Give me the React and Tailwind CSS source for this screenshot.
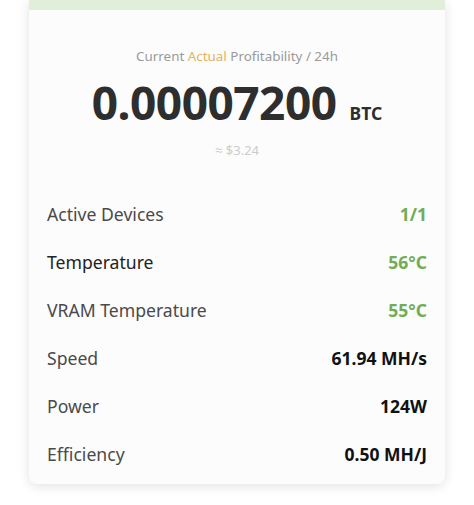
export default function App() {
  const rows = [
    { label: "Active Devices", value: "1/1", green: true, dark: false },
    { label: "Temperature", value: "56°C", green: true, dark: true },
    { label: "VRAM Temperature", value: "55°C", green: true, dark: false },
    { label: "Speed", value: "61.94 MH/s", green: false, dark: false },
    { label: "Power", value: "124W", green: false, dark: false },
    { label: "Efficiency", value: "0.50 MH/J", green: false, dark: false },
  ];

  return (
    <div
      className="w-[474px] h-[505px] bg-white overflow-hidden"
      style={{ fontFamily: '"Noto Sans", "Open Sans", sans-serif' }}
    >
      <div className="mx-[29px] w-[416px] bg-[#fcfcfc] rounded-b-lg shadow-[0_2px_12px_rgba(0,0,0,0.12)]">
        <div className="h-[10px] bg-[#e1efda]" />
        <div className="pt-[36px] text-center text-[13.4px] text-[#9a9a9a]">
          Current <span className="text-[#e3b360]">Actual</span> Profitability / 24h
        </div>
        <div className="mt-[8px] flex items-baseline justify-center">
          <span className="text-[46px] leading-[56px] font-bold text-[#2e2e2e] tracking-[-0.5px]">
            0.00007200
          </span>
          <span className="ml-[13px] text-[17.5px] font-bold text-[#2e2e2e]">BTC</span>
        </div>
        <div className="mt-[11px] text-center text-[13px] text-[#cccccc]">≈ $3.24</div>
        <div className="mt-[30px] px-[18px] pb-[5px]">
          {rows.map((r) => (
            <div key={r.label} className="h-[48px] flex items-center justify-between">
              <span
                className={
                  "text-[17.6px] " + (r.dark ? "text-[#222222]" : "text-[#4a4a4a]")
                }
              >
                {r.label}
              </span>
              <span
                className={
                  "text-[17.5px] font-bold " +
                  (r.green ? "text-[#72ad55]" : "text-[#111111]")
                }
              >
                {r.value}
              </span>
            </div>
          ))}
        </div>
      </div>
    </div>
  );
}
